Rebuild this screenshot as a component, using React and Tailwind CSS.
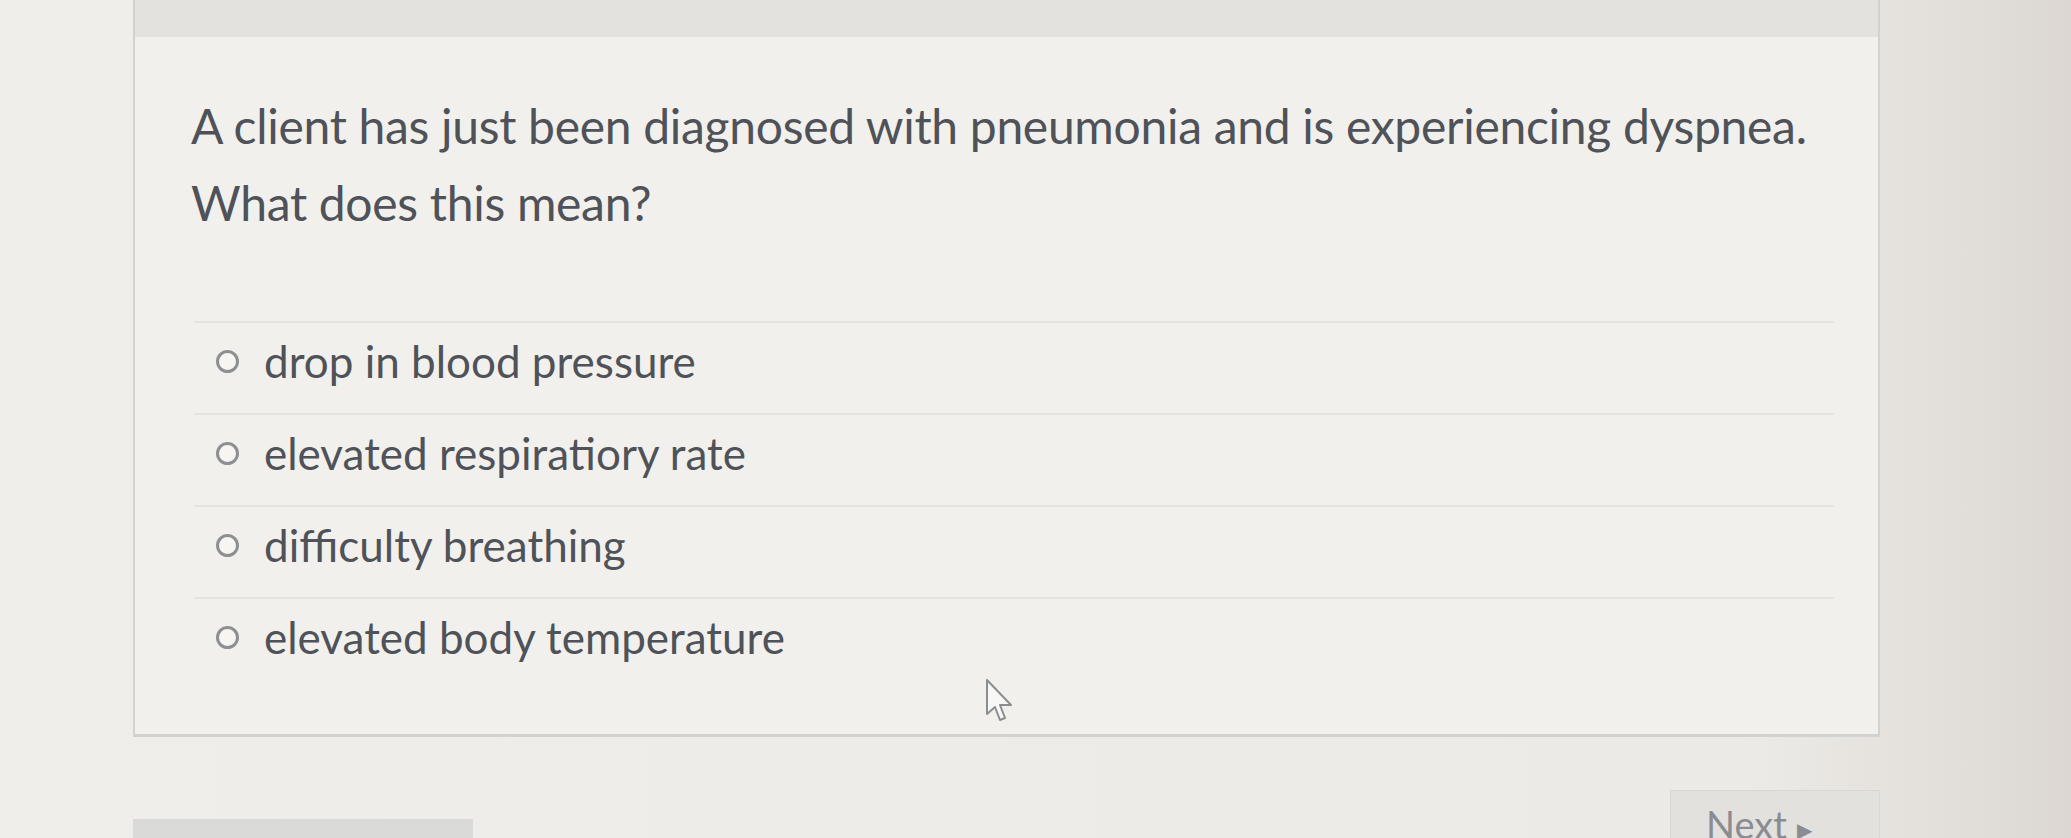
import React from 'react';

const options = [
  'drop in blood pressure',
  'elevated respiratiory rate',
  'difficulty breathing',
  'elevated body temperature',
];

const Radio = () => (
  <span className="w-[23px] h-[23px] rounded-full border-[3px] border-[#8d8f93] bg-[#f6f5f2] shrink-0" />
);

const Cursor = () => (
  <svg width="30" height="46" viewBox="0 0 30 46" className="absolute left-[985px] top-[678px]">
    <path
      d="M2 2 L2 36 L10 29 L15 42 L20 40 L15 27 L26 27 Z"
      fill="#f7f7f5"
      stroke="#8c8d91"
      strokeWidth="2"
      strokeLinejoin="round"
    />
  </svg>
);

export default function App() {
  return (
    <div className="relative w-[2071px] h-[838px] overflow-hidden bg-linear-to-r from-[#efeeea] via-[#eceae6] via-85% to-[#dcd7d2] font-['Lato','Open_Sans',sans-serif] text-[#4f5258]">
      <div className="ml-[133px] w-[1747px]">
        <div className="h-[737px] bg-[#f1f0ec] border-l-2 border-r-2 border-b-[3px] border-[#d2d2d0]">
          <div className="h-[37px] bg-[#e3e2df]" />
          <div className="px-[56px] pt-[50px]">
            <p className="text-[48px] leading-[77px] whitespace-nowrap tracking-[-0.3px]">
              A client has just been diagnosed with pneumonia and is experiencing dyspnea.
              <br />
              What does this mean?
            </p>
            <div className="mt-[80px] ml-[3px] mr-[-12px]">
              {options.map((o) => (
                <div
                  key={o}
                  className="h-[92px] flex items-center pb-[14px] pl-[22px] gap-[25px] border-t-2 border-[#e5e4e0]"
                >
                  <Radio />
                  <span className="text-[44px] leading-none">{o}</span>
                </div>
              ))}
            </div>
          </div>
        </div>
        <div className="flex justify-between items-start mt-[53px]">
          <div className="mt-[29px] w-[340px] h-[40px] bg-[#dadad8]" />
          <div className="w-[210px] h-[60px] bg-[#e2e1de] border border-[#d8d7d3] pl-[35px] pt-[14px] text-[38px] leading-none text-[#8a8c91]">
            Next <span className="text-[20px] align-middle">▶</span>
          </div>
        </div>
      </div>
      <Cursor />
    </div>
  );
}
